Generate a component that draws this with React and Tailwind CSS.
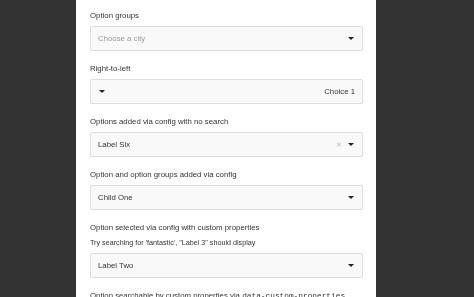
import React from 'react';

const Arrow = ({ className = '' }) => (
    <span className={`block w-0 h-0 border-x-[3px] border-t-[3px] border-x-transparent border-t-[#222] ${className}`} />
);

function Select({ value, placeholder, rtl = false, clearable = false }) {
    return (
        <div className="h-[25px] flex items-center bg-[#f9f9f9] border border-[#ddd] rounded-[2px] px-[7px] mb-[12px]">
            {rtl ? (
                <>
                    <Arrow className="ml-[1px]" />
                    <span className="flex-1 text-right text-[#333]">{value}</span>
                </>
            ) : (
                <>
                    <span className={`flex-1 ${value ? 'text-[#333]' : 'text-[#999]'}`}>{value || placeholder}</span>
                    {clearable && <span className="text-[#bbb] text-[7px] mr-[6px] leading-none">✕</span>}
                    <Arrow className="mr-[1px]" />
                </>
            )}
        </div>
    );
}

function Label({ children, small = false, className = '' }) {
    return (
        <div className={`h-[12px] leading-[12px] text-[#333] ${small ? 'text-[7.2px]' : ''} ${className}`}>
            {children}
        </div>
    );
}

function App() {
    return (
        <div className="h-screen w-full flex bg-[#333333] overflow-hidden font-['Liberation_Sans',Arial,sans-serif] text-[7.8px]">
            <div className="w-[76px] shrink-0" />
            <div className="w-[300px] shrink-0 h-full bg-white pt-[10px] pl-[14px] pr-[13px] will-change-transform">
                <Label className="mb-[4px]">Option groups</Label>
                <Select placeholder="Choose a city" />

                <Label className="mb-[4px]">Right-to-left</Label>
                <Select value="Choice 1" rtl />

                <Label className="mb-[4px]">Options added via config with no search</Label>
                <Select value="Label Six" clearable />

                <Label className="mb-[4px]">Option and option groups added via config</Label>
                <Select value="Child One" />

                <Label className="mb-[3px]">Option selected via config with custom properties</Label>
                <Label small className="mb-[4px]">Try searching for 'fantastic', "Label 3" should display</Label>
                <Select value="Label Two" />

                <Label>
                    Option searchable by custom properties via{' '}
                    <code className="font-['Liberation_Mono',monospace]">data-custom-properties</code>
                </Label>
            </div>
        </div>
    );
}

export default App;
